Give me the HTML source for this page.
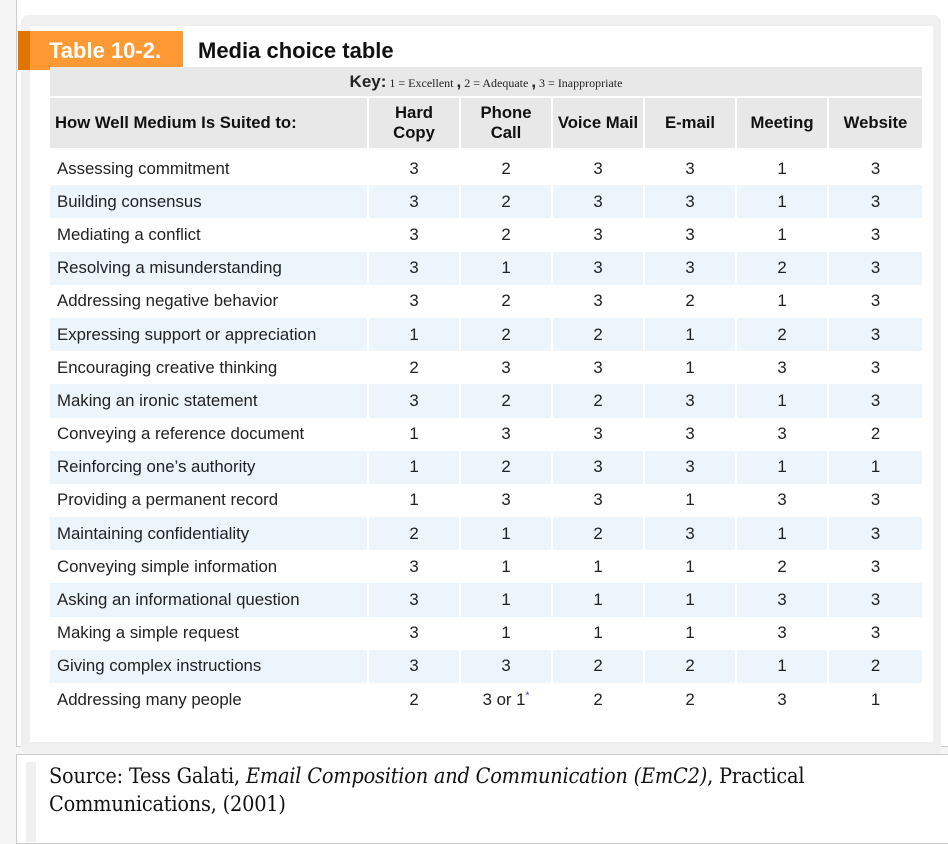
<!DOCTYPE html>
<html><head><meta charset="utf-8"><style>
*{margin:0;padding:0;box-sizing:border-box}
body{width:948px;height:827px;background:#f5f5f5;position:relative;overflow:hidden;font-family:"Liberation Sans",Arial,sans-serif;color:#111}
.box1{position:absolute;left:16px;top:-2px;width:940px;height:749px;background:#fff;border:1px solid #ccc}
.panel{position:absolute;left:21px;top:15px;width:920px;height:740px;background:#f0f0f0;border-radius:8px}
.inner{position:absolute;left:30px;top:26px;width:903px;height:716px;background:#fff}
.lab{position:absolute;left:18px;top:31px;width:165px;height:39px;background:#ff9933;border-left:12px solid #e07400;color:#fff;font-weight:bold;font-size:22px;line-height:39px;padding-left:19px}
.title{position:absolute;left:198px;top:37px;font-weight:bold;font-size:22px;line-height:28px}
table{position:absolute;left:50px;top:67px;width:872px;border-collapse:collapse;table-layout:fixed}
td,th{font-size:16.8px;text-align:center;height:33.2px;color:#222;font-weight:normal;border-left:2px solid #fff;padding:0}
td:first-child,th:first-child{text-align:left;padding-left:7px;border-left:none}
.key th{background:#e8e8e8;height:30px;font-size:12px;font-family:"Liberation Serif",serif;border:none;vertical-align:bottom;padding-bottom:4px}
.key b{font-family:"Liberation Sans",sans-serif;font-size:17px;font-weight:bold}
.hd th{background:#e8e8e8;height:51px;font-weight:bold;font-size:16.7px;color:#111;border-top:2px solid #fff;line-height:20px}
.hd th:first-child{padding-left:5px}
.gap td{height:4px;border:none}
tr.s td{background:#ebf5fb}
.box2{position:absolute;left:16px;top:754px;width:940px;height:90px;background:#fff;border:1px solid #ccc}
.strip{position:absolute;left:26px;top:762px;width:10px;height:80px;background:#f0f0f0}
.src{position:absolute;left:49px;top:763px;font-family:"DejaVu Serif Condensed","Liberation Serif",serif;font-size:21.5px;line-height:28px;color:#111;letter-spacing:-0.2px}
sup{color:#33c;font-size:10px}
</style></head><body>
<div class="box1"></div><div class="panel"></div><div class="inner"></div>
<div class="lab">Table 10-2.</div><div class="title">Media choice table</div>
<table>
<colgroup><col style="width:318px"><col style="width:92px"><col style="width:92px"><col style="width:92px"><col style="width:92px"><col style="width:92px"><col style="width:94px"></colgroup>
<tr class="key"><th colspan="7" style="text-align:center;padding-left:0"><b>Key:</b> 1 = Excellent <b>,</b> 2 = Adequate <b>,</b> 3 = Inappropriate</th></tr>
<tr class="hd"><th>How Well Medium Is Suited to:</th><th>Hard<br>Copy</th><th>Phone<br>Call</th><th>Voice Mail</th><th>E-mail</th><th>Meeting</th><th>Website</th></tr>
<tr class="gap"><td colspan="7"></td></tr>
<tr><td>Assessing commitment</td><td>3</td><td>2</td><td>3</td><td>3</td><td>1</td><td>3</td></tr>
<tr class="s"><td>Building consensus</td><td>3</td><td>2</td><td>3</td><td>3</td><td>1</td><td>3</td></tr>
<tr><td>Mediating a conflict</td><td>3</td><td>2</td><td>3</td><td>3</td><td>1</td><td>3</td></tr>
<tr class="s"><td>Resolving a misunderstanding</td><td>3</td><td>1</td><td>3</td><td>3</td><td>2</td><td>3</td></tr>
<tr><td>Addressing negative behavior</td><td>3</td><td>2</td><td>3</td><td>2</td><td>1</td><td>3</td></tr>
<tr class="s"><td>Expressing support or appreciation</td><td>1</td><td>2</td><td>2</td><td>1</td><td>2</td><td>3</td></tr>
<tr><td>Encouraging creative thinking</td><td>2</td><td>3</td><td>3</td><td>1</td><td>3</td><td>3</td></tr>
<tr class="s"><td>Making an ironic statement</td><td>3</td><td>2</td><td>2</td><td>3</td><td>1</td><td>3</td></tr>
<tr><td>Conveying a reference document</td><td>1</td><td>3</td><td>3</td><td>3</td><td>3</td><td>2</td></tr>
<tr class="s"><td>Reinforcing one’s authority</td><td>1</td><td>2</td><td>3</td><td>3</td><td>1</td><td>1</td></tr>
<tr><td>Providing a permanent record</td><td>1</td><td>3</td><td>3</td><td>1</td><td>3</td><td>3</td></tr>
<tr class="s"><td>Maintaining confidentiality</td><td>2</td><td>1</td><td>2</td><td>3</td><td>1</td><td>3</td></tr>
<tr><td>Conveying simple information</td><td>3</td><td>1</td><td>1</td><td>1</td><td>2</td><td>3</td></tr>
<tr class="s"><td>Asking an informational question</td><td>3</td><td>1</td><td>1</td><td>1</td><td>3</td><td>3</td></tr>
<tr><td>Making a simple request</td><td>3</td><td>1</td><td>1</td><td>1</td><td>3</td><td>3</td></tr>
<tr class="s"><td>Giving complex instructions</td><td>3</td><td>3</td><td>2</td><td>2</td><td>1</td><td>2</td></tr>
<tr><td>Addressing many people</td><td>2</td><td>3 or 1<sup>*</sup></td><td>2</td><td>2</td><td>3</td><td>1</td></tr>
</table>
<div class="box2"></div><div class="strip"></div>
<div class="src">Source: Tess Galati, <i>Email Composition and Communication (EmC2)</i>, Practical<br>Communications, (2001)</div>
</body></html>
